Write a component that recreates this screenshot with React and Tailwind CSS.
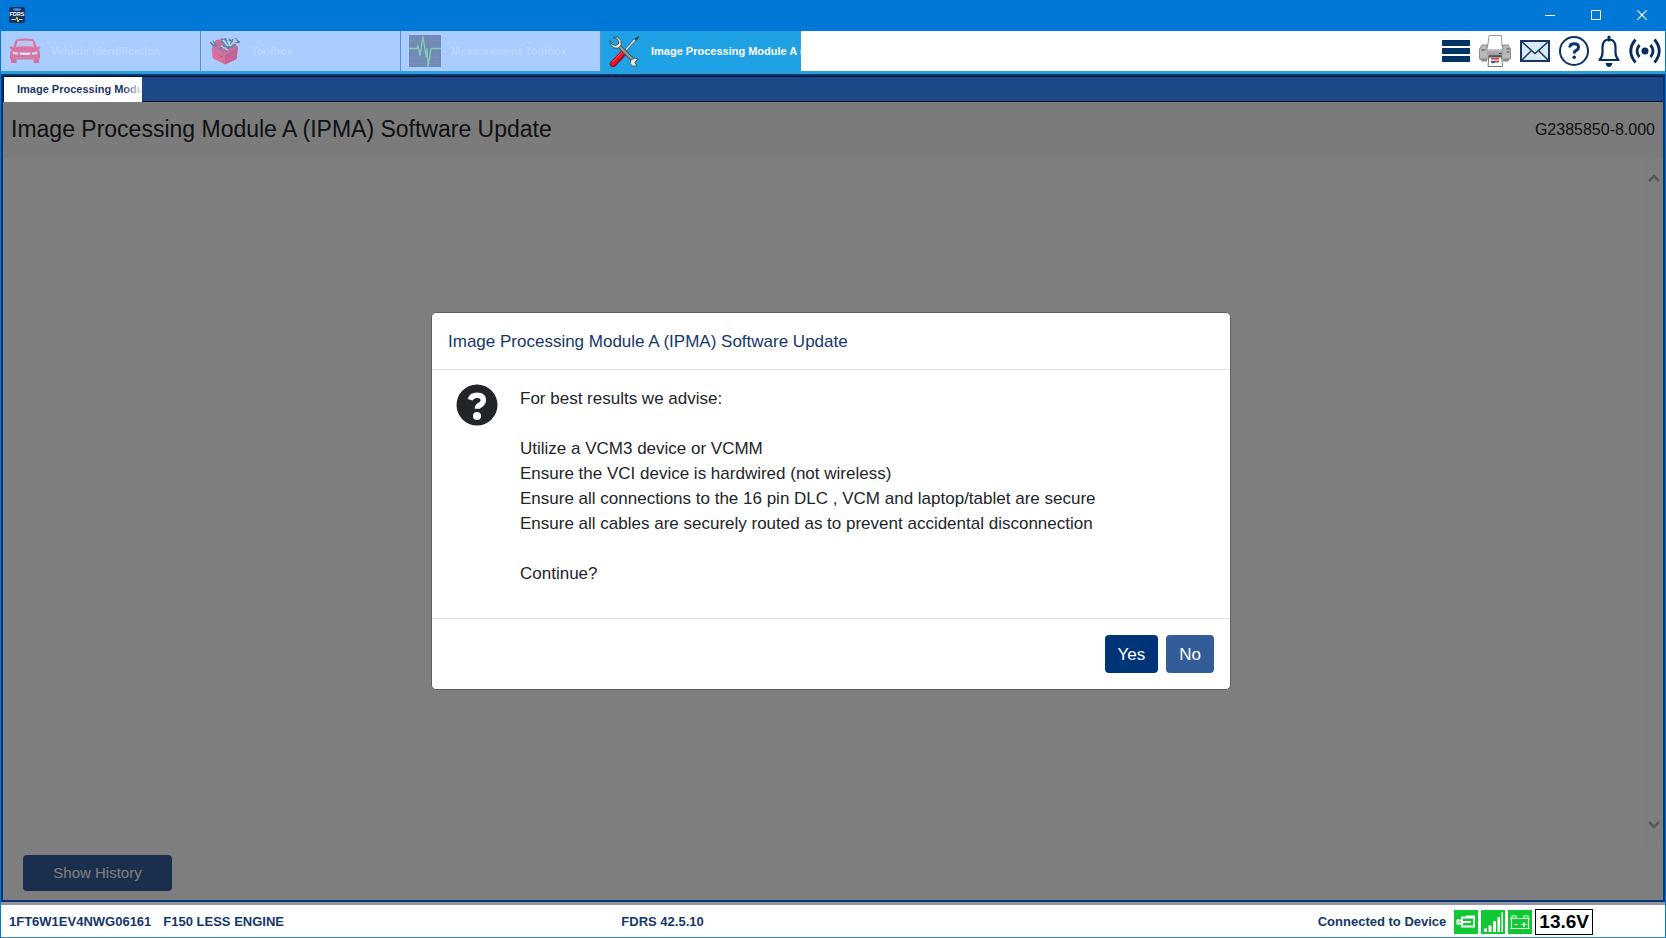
import React from "react";

function FdrsLogo() {
  return (
    <svg viewBox="0 0 16 16" className="size-4" aria-hidden="true">
      <rect width="16" height="16" rx="2" fill="#14315f" />
      <ellipse cx="8" cy="2.6" rx="4.2" ry="1.3" fill="#4f8fd0" />
      <text x="8" y="9" textAnchor="middle" fontSize="5.6" fontWeight="700" fontFamily="Liberation Sans, Arial, sans-serif" fill="#fff">FDRS</text>
      <path d="M2.5 12.5h4M10 12.5h3.5" stroke="#c8d4e6" strokeWidth="1.2" />
      <path d="M5.5 12.5h1.5l1-2.5 1 5 1-2.5" stroke="#e5e04a" strokeWidth="1" fill="none" />
    </svg>
  );
}

function CarIcon() {
  return (
    <svg viewBox="0 0 32 32" className="size-8" aria-hidden="true">
      <path d="M2 23.500h5.500v4.500H2zM24.500 23.500H30v4.500h-5.500z" fill="#d2709f" />
      <path d="M8.200 4.200Q16 3 23.800 4.200q1.400.300 2 2l1.900 6.100 2.300-.800q1.600-.200 1.600 1.300-.200 1-2.100 1.300 1.500 1.800 1.500 4.400v4.500q0 1.500-1.500 1.500h-27Q1 24.500 1 23v-4.500q0-2.600 1.500-4.400Q.600 13.800.400 12.800q0-1.500 1.600-1.300l2.300.8 1.900-6.100q.6-1.700 2-2z" fill="#d8749f" />
      <path d="M8.600 6q7.400-1 14.800 0l1.800 5.800q-9.200-1.200-18.400 0z" fill="#b7c6ee" />
      <path d="M3.500 16.500l6 1.300-1 2-4.500-.5zM28.500 16.500l-6 1.300 1 2 4.500-.5z" fill="#c9daff" />
      <path d="M10 17.500h12l-1.500 2.500h-9z" fill="#d3dffc" />
      <path d="M7 22.800h18" stroke="#c58fb8" strokeWidth="1.200" />
    </svg>
  );
}

function ToolboxIcon() {
  return (
    <svg viewBox="0 0 32 32" className="size-8" aria-hidden="true">
      <path d="M3 12l13 8 13-8-1.500 12L16 29.500 3.500 23z" fill="#d96c9b" />
      <path d="M16 20l13-8-1.500 12L16 29.500z" fill="#c26397" />
      <path d="M3 12L7 5l6-1 3 9 10-4 3 3-13 8z" fill="#c4709f" />
      <path d="M1 7q3 4 7 4M4 6l3 4M13 6l6 8M16 3l4 10M24 4l-5 10M30 6l-8 7M26 3l4 4M10 14l6-3 8 1M20 4l7 6M12 4l12 2M22 9l9-2" stroke="#5f83a6" strokeWidth="1.500" fill="none" />
      <path d="M14 5l5 6M18 3l3 8M27 4l-6 7M12 11l7 4M24 8l5 1" stroke="#b9d6f0" strokeWidth="1.200" fill="none" />
      <path d="M10 20q2.500 3 4 1" stroke="#ae558d" fill="none" />
    </svg>
  );
}

function PulseIcon() {
  return (
    <svg viewBox="0 0 32 32" className="size-8" aria-hidden="true">
      <rect width="32" height="32" fill="#718ab3" />
      <path d="M0 5.500h32M0 22.500h32M0 28.500h32M6 0v32M22 0v32M28 0v32" stroke="#7890b9" strokeWidth=".7" />
      <path d="M0 13.500h8l1-3 2 10 3-19 3 20 1-8 1 18 3-18H32" fill="none" stroke="#86c9b7" strokeWidth="1.300" strokeLinejoin="round" />
    </svg>
  );
}

function ToolsIcon() {
  return (
    <svg viewBox="0 0 32 32" className="size-8" aria-hidden="true">
      <path d="M15 17L26.500 4" stroke="#536878" strokeWidth="2.800" />
      <path d="M15 17L26.500 4" stroke="#dce8ee" strokeWidth="1.300" />
      <path d="M25 4l4.500-3 .8.800L27.500 6z" fill="#2f4a5c" />
      <path d="M4 29L15 17.500" stroke="#8c1220" strokeWidth="6.500" strokeLinecap="round" />
      <path d="M3.800 28.500L14.500 17" stroke="#e61420" strokeWidth="4.500" strokeLinecap="round" />
      <path d="M3.500 27L13 17" stroke="#ff6c6c" strokeWidth=".8" />
      <path d="M8 9l17 17" stroke="#42545f" strokeWidth="4" />
      <path d="M8 9l17 17" stroke="#8d9ba2" strokeWidth="2.400" />
      <path d="M4 2.500l4.500 1.700 1.500 4-3 2.300-4-1L1 5.500l.500 4.300 3 3 4.500.500 3.300-3.300L12 5.500 8.500 2z" fill="#dfe6e6" stroke="#435862" strokeWidth="1" />
      <path d="M29.500 24.500l-3.500-1.500-4 1.500-1 4 2.500 2.700 4.500-.2-2-3.500 1.500-2z" fill="#dfe6e6" stroke="#435862" strokeWidth="1" />
    </svg>
  );
}

function MenuIcon() {
  return (
    <svg viewBox="0 0 28 22" className="h-[22px] w-7" aria-hidden="true">
      <path d="M0 0h28v6H0zM0 8h28v6H0zM0 16h28v6H0z" fill="#033468" />
    </svg>
  );
}

function PrinterIcon() {
  return (
    <svg viewBox="0 0 32 32" className="size-8" aria-hidden="true">
      <path d="M8.500 13L10 .500h12.500L23 13z" fill="#fff" stroke="#9a9a9a" />
      <path d="M3 10h5.500l-.5 4.500h16L23.500 10H29l2.500 4v10H.500V14z" fill="#b9bab9" stroke="#777" strokeWidth=".8" />
      <path d="M9 11h14v3.500H8.500z" fill="#fff" />
      <path d="M8 16.500h16.500V20H8z" fill="#a5a7a6" />
      <path d="M2.500 15h4M27.500 14h3M27.500 17h3M20 18.500h3" stroke="#4b4b4b" strokeWidth="1" />
      <path d="M1 24h7v2.500H3zM24 24h7l-2 2.500h-5z" fill="#8a8a8a" />
      <path d="M10 20.500h12.500l1 11H9z" fill="#fff" stroke="#555" strokeWidth=".8" />
      <path d="M9.500 20.500h13v2h-13z" fill="#555" />
      <path d="M12 22.500h8v6h-8z" fill="#dfe4f6" />
      <path d="M12 23.500h8" stroke="#d23a2a" strokeWidth="1.800" />
      <path d="M12 27h4" stroke="#3566bc" strokeWidth="2.200" />
      <path d="M16 26.500h4" stroke="#e0472f" strokeWidth="1.800" />
    </svg>
  );
}

function MailIcon() {
  return (
    <svg viewBox="0 0 30 22" className="h-[22px] w-[30px]" aria-hidden="true">
      <rect x="1" y="1" width="28" height="20" fill="#dbe8f4" />
      <g fill="none" stroke="#14365f">
        <path d="M1.500 1.500L15 13.500l13.500-12M1.500 20.500l10-10M28.500 20.500l-10-10" strokeWidth="1.500" />
        <rect x="1" y="1" width="28" height="20" strokeWidth="2" />
      </g>
    </svg>
  );
}

function HelpIcon() {
  return (
    <svg viewBox="0 0 30 30" className="size-[30px]" aria-hidden="true" fill="none" stroke="#0a3465">
      <circle cx="15" cy="15" r="14" strokeWidth="2" />
      <path d="M10.800 11.500q.200-3.700 4.400-3.700 4.300 0 4.300 3.400 0 2-2.200 3.200-2.100 1.100-2.100 3.100" strokeWidth="3" />
      <circle cx="15.200" cy="21.200" r="1.800" fill="#0a3465" stroke="none" />
    </svg>
  );
}

function BellIcon() {
  return (
    <svg viewBox="0 0 22 32" className="h-8 w-[22px]" aria-hidden="true">
      <path d="M11 2v3" stroke="#072f60" strokeWidth="3" strokeLinecap="round" />
      <path d="M1.500 25q3-3 3-7.500v-5Q4.500 4.500 11 4.500t6.500 8v5q0 4.500 3 7.500z" fill="none" stroke="#072f60" strokeWidth="2.200" strokeLinejoin="round" />
      <path d="M7.500 28h7q-.8 4-3.500 4t-3.500-4z" fill="#072f60" />
    </svg>
  );
}

function SignalIcon() {
  return (
    <svg viewBox="0 0 32 26" className="h-[26px] w-8" aria-hidden="true">
      <circle cx="16" cy="13" r="3.500" fill="#052b60" />
      <g fill="none" stroke="#052b60" strokeWidth="2.800">
        <path d="M10.500 7q-5 6 0 12M21.500 7q5 6 0 12M6.500 1.500q-9.500 11.500 0 23M25.500 1.500q9.500 11.500 0 23" />
      </g>
    </svg>
  );
}

const tabs = [
  { label: "Vehicle Identification", Icon: CarIcon },
  { label: "Toolbox", Icon: ToolboxIcon },
  { label: "Measurement Toolbox", Icon: PulseIcon },
  { label: "Image Processing Module A (IPMA) Software Update", Icon: ToolsIcon, active: true },
];

const tools = [
  { label: "Menu", Icon: MenuIcon },
  { label: "Print", Icon: PrinterIcon },
  { label: "Messages", Icon: MailIcon },
  { label: "Help", Icon: HelpIcon },
  { label: "Notifications", Icon: BellIcon },
  { label: "Connection", Icon: SignalIcon },
];

function TitleBar() {
  return (
    <header className="flex h-[31px] shrink-0 items-start justify-between bg-[#0078d7] pr-px pl-[9px]">
      <div className="pt-[7px]"><FdrsLogo /></div>
      <div className="flex">
        <button aria-label="Minimize" className="flex h-[30px] w-[46px] items-center justify-center">
          <svg viewBox="0 0 10 10" className="size-[10px]"><path d="M0 5.500h10" stroke="#fff" /></svg>
        </button>
        <button aria-label="Maximize" className="flex h-[30px] w-[46px] items-center justify-center">
          <svg viewBox="0 0 10 10" className="size-[10px]"><path d="M.5.500h9v9h-9z" fill="none" stroke="#fff" /></svg>
        </button>
        <button aria-label="Close" className="flex h-[30px] w-[46px] items-center justify-center">
          <svg viewBox="0 0 10 10" className="size-[10px]"><path d="M0 0l10 10M10 0L0 10" stroke="#fff" strokeWidth="1.200" /></svg>
        </button>
      </div>
    </header>
  );
}

function Toolbar() {
  return (
    <div className="flex h-[43px] shrink-0 justify-between border-b-[3px] border-[#2a9fd8] bg-white">
      <nav className="flex">
        {tabs.map(({ label, Icon, active }) => (
          <button
            key={label}
            className={
              active
                ? "flex w-[200px] items-center gap-[10px] overflow-hidden bg-[#1fa1e6] pl-2 text-[11px] font-bold whitespace-nowrap text-white"
                : "flex w-[200px] items-center gap-[10px] overflow-hidden border-r border-[#5f8fc8] bg-[#aacdff] pl-2 text-[11px] font-bold whitespace-nowrap text-[#bcd8ff]"
            }
          >
            <span className="shrink-0"><Icon /></span>
            <span>{label}</span>
          </button>
        ))}
      </nav>
      <div className="flex items-center gap-[9px] pr-1">
        {tools.map(({ label, Icon }) => (
          <button key={label} aria-label={label}><Icon /></button>
        ))}
      </div>
    </div>
  );
}

function UpdateDialog() {
  return (
    <section
      role="dialog"
      aria-labelledby="dialog-title"
      className="w-full max-w-[800px] rounded-[5px] border border-[#5f5f5f] bg-white text-[17px] leading-[25px] text-[#212529]"
    >
      <h2 id="dialog-title" className="border-b border-[#dee2e6] px-4 pt-4 pb-[15px] text-[#14376b]">
        Image Processing Module A (IPMA) Software Update
      </h2>
      <div className="flex gap-[22px] px-6 pt-[14px] pb-8">
        <svg viewBox="0 0 42 42" className="size-[42px] shrink-0" aria-hidden="true">
          <circle cx="21" cy="21" r="20.500" fill="#212529" />
          <path d="M14.200 15.800q1.400-4.500 6.800-4.500 6.300 0 6.300 5 0 2.700-2.900 4.500-3 1.500-3 4" fill="none" stroke="#fff" strokeWidth="5.500" />
          <circle cx="21" cy="32" r="4" fill="#fff" />
        </svg>
        <div className="pt-0.5">
          <p>For best results we advise:</p>
          <p className="mt-[25px]">
            Utilize a VCM3 device or VCMM<br />
            Ensure the VCI device is hardwired (not wireless)<br />
            Ensure all connections to the 16 pin DLC , VCM and laptop/tablet are secure<br />
            Ensure all cables are securely routed as to prevent accidental disconnection
          </p>
          <p className="mt-[25px]">Continue?</p>
        </div>
      </div>
      <div className="flex justify-end gap-2 border-t border-[#dee2e6] p-4">
        <button className="h-[38px] rounded bg-[#003478] px-[13px] text-white">Yes</button>
        <button className="h-[38px] rounded bg-[#335d98] px-[13px] text-white">No</button>
      </div>
    </section>
  );
}

function StatusBar() {
  return (
    <footer className="grid h-[33px] shrink-0 grid-cols-3 items-center border-b border-[#3a86b8] bg-white px-2 pt-0.5 text-[13px] font-bold text-[#14376b]">
      <div className="flex gap-3">
        <span>1FT6W1EV4NWG06161</span>
        <span>F150 LESS ENGINE</span>
      </div>
      <div className="pl-[63px]">FDRS 42.5.10</div>
      <div className="flex items-center justify-end gap-[3px] pr-16">
        <span className="mr-[5px]">Connected to Device</span>
        <svg viewBox="0 0 24 24" className="size-6" aria-hidden="true">
          <path d="M0 0h24v24H0z" fill="#10c832" />
          <path d="M8 7.500h12v9H8zM3 10.500h5M3 13.500h5M9 12h8" fill="none" stroke="#fff" strokeWidth="1.800" />
          <path d="M3.500 9.500v5M12 6.500h9" stroke="#fff" strokeWidth="2" />
        </svg>
        <svg viewBox="0 0 24 24" className="size-6" aria-hidden="true">
          <path d="M0 0h24v24H0z" fill="#10c832" />
          <path d="M3 18.500h3V22H3zM7.500 15.500h3V22h-3zM12 11h3v11h-3zM16.500 7H19v15h-2.500zM20.500 2.500H22V22h-1.500z" fill="#fff" />
        </svg>
        <svg viewBox="0 0 24 24" className="size-6" aria-hidden="true">
          <path d="M0 0h24v24H0z" fill="#10c832" />
          <path d="M2 8.500h20M3.500 8.500v10M20.500 8.500v10M2 18.500h20M4 8V6h4v2M16 8V6h4v2" fill="none" stroke="#d9ffe0" strokeWidth="1.200" />
          <path d="M6 14.500h4M13 14.500h6M16 12v5" stroke="#fff" strokeWidth="1.200" />
        </svg>
        <span className="border border-black bg-white px-[3px] text-[19px] leading-6 text-black">13.6V</span>
      </div>
    </footer>
  );
}

export default function App() {
  return (
    <div className="flex h-screen flex-col overflow-hidden bg-white font-['Liberation_Sans',Arial,sans-serif]">
      <TitleBar />
      <div className="flex min-h-0 flex-1 flex-col border-x border-[#0078d7]">
        <Toolbar />
        <main className="flex min-h-0 flex-1 flex-col border-2 border-[#083472]">
          <div className="flex h-[26px] shrink-0 border-y border-l border-[#07142c] bg-[#1c4789]">
            <button className="relative -mb-px w-[138px] overflow-hidden bg-white pl-[13px] text-left text-[11px] leading-[25px] font-bold whitespace-nowrap text-[#1c3868]">
              Image Processing Module A
              <span className="absolute inset-y-0 right-0 w-5 bg-linear-to-r from-transparent to-white/90" />
            </button>
          </div>
          <div className="relative flex min-h-0 flex-1 flex-col bg-white text-[#212529]">
            <div className="flex h-[56px] shrink-0 items-center justify-between bg-[#f7f7f7] pr-2 pl-2">
              <h1 className="pb-0.5 text-[23px]">Image Processing Module A (IPMA) Software Update</h1>
              <span className="text-base">G2385850-8.000</span>
            </div>
            <div className="flex min-h-0 flex-1 justify-end">
              <div className="flex w-[18px] flex-col items-center justify-between bg-[#fcfcfc] pt-[14px] pb-4">
                <svg viewBox="0 0 12 12" className="size-3"><path d="M1 9l5-5 5 5" fill="none" stroke="#b4b4b4" strokeWidth="2.500" /></svg>
                <svg viewBox="0 0 12 12" className="size-3"><path d="M1 3l5 5 5-5" fill="none" stroke="#b4b4b4" strokeWidth="2.500" /></svg>
              </div>
            </div>
            <div className="shrink-0 px-5 pt-2 pb-[9px]">
              <button className="h-9 w-[149px] rounded bg-[#345c9a] text-[15px] text-white">Show History</button>
            </div>
            <div className="absolute inset-0 flex items-center justify-center bg-black/50 pr-1">
              <UpdateDialog />
            </div>
          </div>
        </main>
        <div className="h-[3px] shrink-0 bg-[#9496a4]" />
        <StatusBar />
      </div>
    </div>
  );
}
